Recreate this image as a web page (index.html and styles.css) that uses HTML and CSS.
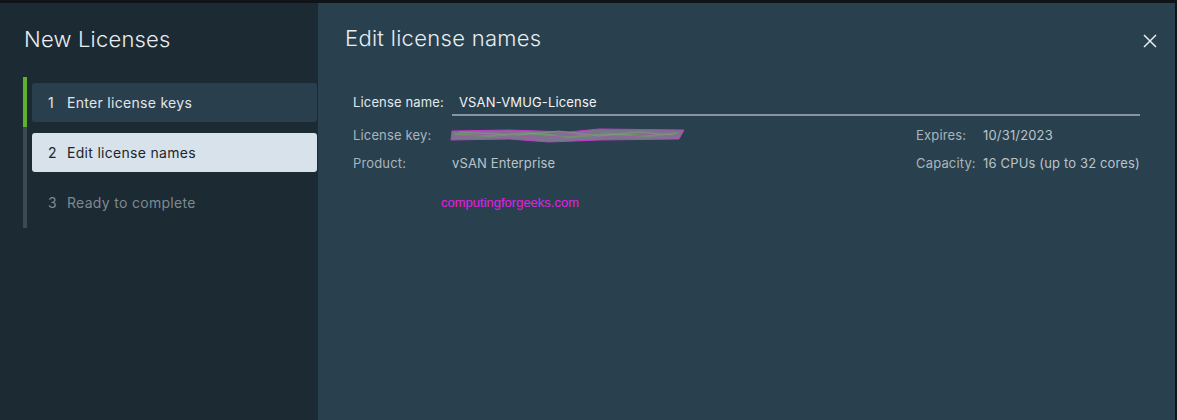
FILE: index.html
```html
<!DOCTYPE html>
<html lang="en">
<head>
<meta charset="utf-8">
<title>New Licenses</title>
<link rel="stylesheet" href="styles.css">
</head>
<body>
<div class="topstrip"></div>
<div class="wizard">
  <aside class="sidebar">
    <h1 class="wiz-title">New Licenses</h1>
    <div class="steps">
      <div class="rail"></div>
      <ol class="step-list">
        <li class="step step-done"><span class="num">1</span>Enter license keys</li>
        <li class="step step-active"><span class="num">2</span>Edit license names</li>
        <li class="step step-todo"><span class="num">3</span>Ready to complete</li>
      </ol>
    </div>
  </aside>
  <main class="panel">
    <header class="panel-head">
      <h2 class="panel-title">Edit license names</h2>
      <button class="close" aria-label="Close">
        <svg width="14" height="14" viewBox="0 0 14 14"><path d="M1 1 L13 13 M13 1 L1 13" stroke="#e6ecef" stroke-width="1.5" fill="none"/></svg>
      </button>
    </header>
    <form class="form">
      <div class="name-row">
        <label class="name-label" for="lname">License name:</label>
        <input class="name-input" id="lname" type="text" value="VSAN-VMUG-License">
      </div>
      <div class="info">
        <span class="lbl">License key:</span>
        <span class="val key">
          <svg class="scribble" width="240" height="16" viewBox="0 0 240 16">
            <path d="M3 4 L60 3 L120 5 L150 2 L235 3 L230 12 L150 13 L100 15 L60 12 L2 13 Z" fill="#77768a" stroke="#c63ac8" stroke-width="1"/>
            <path d="M6 7 L40 9 L80 6 L120 10 L160 7 L200 9 L228 6" stroke="#6f9a6a" stroke-width="2" fill="none" opacity="0.8"/>
            <path d="M8 10 L50 6 L90 11 L130 7 L170 11 L210 6 L226 9" stroke="#a05aa8" stroke-width="1.5" fill="none" opacity="0.8"/>
            <path d="M10 5 L70 8 L110 4 L150 9 L190 5 L224 8" stroke="#8a9e7a" stroke-width="1" fill="none" opacity="0.7"/>
          </svg>
        </span>
        <span class="lbl">Expires:</span>
        <span class="val">10/31/2023</span>
        <span class="lbl">Product:</span>
        <span class="val">vSAN Enterprise</span>
        <span class="lbl">Capacity:</span>
        <span class="val">16 CPUs (up to 32 cores)</span>
      </div>
      <p class="watermark">computingforgeeks.com</p>
    </form>
  </main>
</div>
</body>
</html>
```

FILE: styles.css
```css
* { box-sizing: border-box; }
html, body { margin: 0; padding: 0; }
body {
  width: 1177px;
  height: 420px;
  overflow: hidden;
  background: #0f1619;
  font-family: Inter, "Open Sans", sans-serif;
}
.topstrip { height: 3px; background: #0e1417; }
.wizard {
  display: flex;
  height: 417px;
  padding-right: 2px;
}
.sidebar {
  width: 318px;
  flex: none;
  background: #1c2a33;
  padding: 22px 1px 0 23px;
}
.wiz-title {
  margin: 0 0 24px 1px;
  font-size: 22px;
  line-height: 28px;
  font-weight: 300;
  letter-spacing: 0.2px;
  color: #e8edf0;
}
.steps { display: flex; }
.rail {
  width: 4px;
  flex: none;
  background: linear-gradient(#5fb12d 0 50px, #3a4b52 50px);
}
.step-list {
  list-style: none;
  margin: 0;
  padding: 6px 0 6px 5px;
  flex: 1;
  display: flex;
  flex-direction: column;
  gap: 11px;
}
.step {
  height: 39px;
  border-radius: 3px;
  display: flex;
  align-items: center;
  padding-left: 16px;
  font-size: 14px;
  letter-spacing: 0.3px;
  color: #e1e6ea;
}
.num { width: 19px; }
.step-done { background: #2a3f4d; }
.step-active { background: #d8e2ea; color: #1a252c; }
.step-todo { color: #7c8991; }
.panel {
  flex: 1;
  background: #29404e;
  padding: 21px 35px 0 27px;
}
.panel-head {
  display: flex;
  justify-content: space-between;
  align-items: center;
  margin-right: -17px;
}
.panel-title {
  margin: 0;
  font-size: 22px;
  line-height: 28px;
  font-weight: 300;
  letter-spacing: 0.3px;
  color: #e8edf0;
}
.close {
  background: none;
  border: 0;
  padding: 0;
  width: 14px;
  height: 14px;
  margin-top: 6px;
  display: flex;
}
.form { margin: 40px 0 0 8px; }
.name-row { display: flex; align-items: flex-end; }
.name-label {
  width: 99px;
  flex: none;
  font-size: 13px;
  letter-spacing: 0.15px;
  color: #e3e8eb;
  padding-bottom: 6px;
}
.name-input {
  flex: 1;
  background: transparent;
  border: 0;
  border-bottom: 2px solid #8596a0;
  color: #f0f3f5;
  font: inherit;
  font-size: 13px;
  letter-spacing: 0.15px;
  padding: 2px 7px 4px;
  height: 24px;
  outline: none;
}
.info {
  display: grid;
  grid-template-columns: 99px 1fr 67px auto;
  row-gap: 10px;
  margin-top: 10px;
  font-size: 13px;
  line-height: 18px;
  letter-spacing: 0.15px;
  color: #a9b5bc;
}
.val { color: #b9c4ca; }
.scribble { display: block; margin: 1px 0 0 -3px; }
.watermark {
  margin: 23px 0 0 88px;
  font-family: "Liberation Sans", Arial, sans-serif;
  font-size: 13px;
  letter-spacing: 0;
  color: #e51fe4;
}
```
